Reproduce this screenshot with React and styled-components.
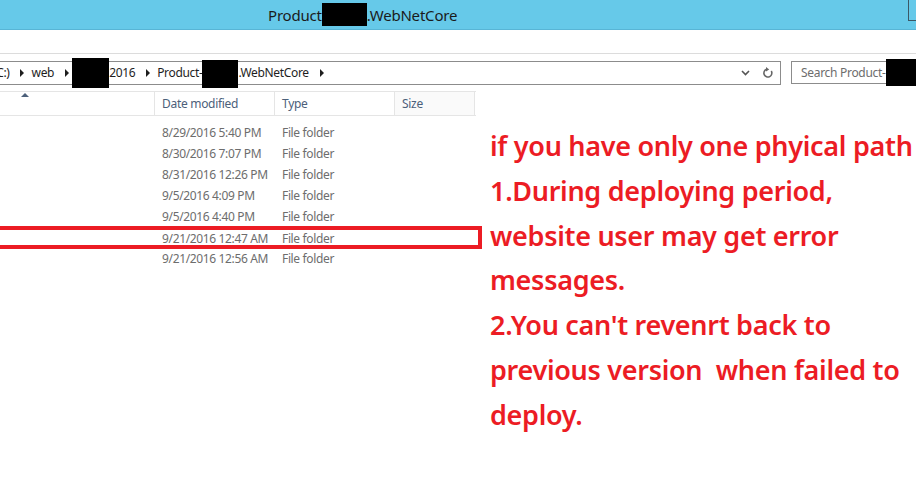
import React from 'react';
import styled, { createGlobalStyle } from 'styled-components';

const Global = createGlobalStyle`
  html, body { margin: 0; padding: 0; background: #fff; }
  body { width: 916px; height: 481px; overflow: hidden; font-family: "Noto Sans", "Open Sans", sans-serif; }
`;

const Window = styled.div`
  width: 916px;
  height: 481px;
  overflow: hidden;
  background: #fff;
`;

const TitleBar = styled.div`
  height: 29px;
  background: #66c9e9;
  border-bottom: 1px solid #58b5d6;
  display: flex;
  align-items: center;
  padding-left: 268px;
  font-size: 15px;
  color: #1b1b1b;
  position: relative;
  letter-spacing: -0.2px;
`;

const WinButton = styled.div`
  position: absolute;
  right: -12px;
  top: -1px;
  width: 18px;
  height: 20px;
  border: 1px solid #3b5866;
`;

const Redact = styled.span`
  display: inline-block;
  flex-shrink: 0;
  background: #000;
  width: ${p => p.$w}px;
  height: ${p => p.$h}px;
  margin: ${p => p.$m || '0'};
  vertical-align: middle;
`;

const Ribbon = styled.div`
  height: 23px;
  border-bottom: 1px solid #dcdcdc;
`;

const NavRow = styled.div`
  display: flex;
  align-items: center;
  height: 37px;
`;

const AddressBar = styled.div`
  flex-shrink: 0;
  margin-left: -12px;
  width: 793px;
  height: 24px;
  border: 1px solid #8c8c8c;
  display: flex;
  align-items: center;
  font-size: 12px;
  letter-spacing: -0.35px;
  color: #1e1e1e;
  padding-left: 4px;
  box-sizing: border-box;
`;

const Crumb = styled.span`
  white-space: nowrap;
`;

const Sep = styled.span`
  display: inline-block;
  flex-shrink: 0;
  width: 0;
  height: 0;
  border-top: 4px solid transparent;
  border-bottom: 4px solid transparent;
  border-left: 4px solid #1e1e1e;
  margin: 0 ${p => p.$r ?? 9}px 0 ${p => p.$l ?? 9}px;
`;

const Spacer = styled.div`flex: 1;`;

const BarIcon = styled.span`
  display: flex;
  align-items: center;
  margin-right: ${p => p.$mr}px;
`;

const SearchBox = styled.div`
  margin-left: 10px;
  flex: 1;
  min-width: 0;
  height: 23px;
  border: 1px solid #8c8c8c;
  border-right: none;
  display: flex;
  align-items: center;
  padding-left: 9px;
  font-size: 12px;
  letter-spacing: -0.3px;
  color: #6d6d6d;
  box-sizing: border-box;
  white-space: nowrap;
`;

const Main = styled.div`
  display: grid;
  grid-template-columns: 484px 1fr;
`;

const Table = styled.div``;

const Header = styled.div`
  display: grid;
  grid-template-columns: 155px 120px 120px 80px;
  width: 476px;
  height: 25px;
  border-top: 1px solid #e5e5e5;
  border-bottom: 1px solid #e5e5e5;
  box-sizing: border-box;
`;

const HeadCell = styled.div`
  border-right: 1px solid #e5e5e5;
  padding-left: 7px;
  font-size: 12px;
  letter-spacing: -0.3px;
  color: #4c607a;
  display: flex;
  align-items: center;
  position: relative;
  background: ${p => p.$hover ? '#fafafa' : '#fff'};
`;

const SortArrow = styled.span`
  position: absolute;
  left: 21px;
  top: 1px;
  width: 0;
  height: 0;
  border-left: 4px solid transparent;
  border-right: 4px solid transparent;
  border-bottom: 4px solid #4c607a;
`;

const Rows = styled.div`
  padding-top: 6px;
`;

const Row = styled.div`
  display: grid;
  grid-template-columns: 155px 120px 120px;
  height: 21px;
  align-items: center;
  font-size: 12px;
  letter-spacing: -0.35px;
  color: #6d6d6d;
  box-sizing: border-box;
  ${p => p.$marked && `
    border: 4px solid #ec1c24;
    border-left: none;
    margin-right: 2px;
    height: 23px;
    margin-top: -1px;
    margin-bottom: -1px;
  `}
`;

const Cell = styled.div`
  padding-left: 7px;
  white-space: nowrap;
`;

const Note = styled.div`
  padding-top: 33px;
  padding-left: 6px;
  font-family: "Noto Sans", "Open Sans", sans-serif;
  font-size: 27px;
  font-weight: 600;
  line-height: 44.8px;
  color: #ec1c24;
  white-space: pre;
  letter-spacing: -0.3px;
`;

const rows = [
  '8/29/2016 5:40 PM',
  '8/30/2016 7:07 PM',
  '8/31/2016 12:26 PM',
  '9/5/2016 4:09 PM',
  '9/5/2016 4:40 PM',
  '9/21/2016 12:47 AM',
  '9/21/2016 12:56 AM',
];

const lines = [
  'if you have only one phyical path',
  '1.During deploying period,',
  'website user may get error',
  'messages.',
  "2.You can't revenrt back to",
  'previous version  when failed to',
  'deploy.',
];

export default function App() {
  return (
    <Window>
      <Global />
      <TitleBar>
        Product<Redact $w={45} $h={23} />.WebNetCore
        <WinButton />
      </TitleBar>
      <Ribbon />
      <NavRow>
        <AddressBar>
          <Crumb>(C:)</Crumb>
          <Sep $l={10} $r={8} />
          <Crumb>web</Crumb>
          <Sep $l={11} $r={3} />
          <Redact $w={37} $h={30} />
          <Crumb>2016</Crumb>
          <Sep $l={11} $r={7} />
          <Crumb>Product-</Crumb>
          <Redact $w={36} $h={28} $m="2px 0 0 0" />
          <Crumb>.WebNetCore</Crumb>
          <Sep $l={11} $r={0} />
          <Spacer />
          <BarIcon $mr={12}>
            <svg width="9" height="6" viewBox="0 0 9 6">
              <path d="M1 1 L4.5 4.5 L8 1" fill="none" stroke="#555" strokeWidth="1.6" />
            </svg>
          </BarIcon>
          <BarIcon $mr={6}>
            <svg width="12" height="12" viewBox="0 0 12 12">
              <path d="M9.3 4 A4 4 0 1 1 4.5 2.3" fill="none" stroke="#666" strokeWidth="1.6" />
              <path d="M4 0 L7.2 2.4 L4 4.6 Z" fill="#666" />
            </svg>
          </BarIcon>
        </AddressBar>
        <SearchBox>
          Search Product-<Redact $w={40} $h={27} />
        </SearchBox>
      </NavRow>
      <Main>
        <Table>
          <Header>
            <HeadCell><SortArrow /></HeadCell>
            <HeadCell>Date modified</HeadCell>
            <HeadCell>Type</HeadCell>
            <HeadCell $hover>Size</HeadCell>
          </Header>
          <Rows>
            {rows.map((d, i) => (
              <Row key={d} $marked={i === 5}>
                <Cell />
                <Cell>{d}</Cell>
                <Cell>File folder</Cell>
              </Row>
            ))}
          </Rows>
        </Table>
        <Note>{lines.join('\n')}</Note>
      </Main>
    </Window>
  );
}
